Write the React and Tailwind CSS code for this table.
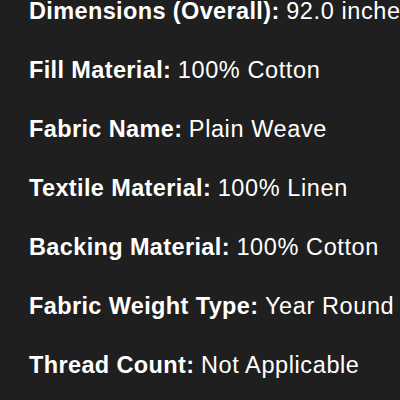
const specs = [
  ["Dimensions (Overall):", "92.0 inches (H) x 87.0 inches (W)"],
  ["Fill Material:", "100% Cotton"],
  ["Fabric Name:", "Plain Weave"],
  ["Textile Material:", "100% Linen"],
  ["Backing Material:", "100% Cotton"],
  ["Fabric Weight Type:", "Year Round"],
  ["Thread Count:", "Not Applicable"],
];

export default function App() {
  return (
    <div
      className="w-[400px] h-[400px] overflow-hidden bg-[#1f1f1f] text-white pl-[29px]"
      style={{ fontFamily: '"Liberation Sans", Arial, sans-serif' }}
    >
      <ul className="-mt-[18px] flex flex-col">
        {specs.map(([label, value]) => (
          <li key={label} className="whitespace-nowrap text-[23.5px] leading-[59px]">
            <span className="font-bold tracking-[0.37px]">{label}</span>{" "}
            <span className="tracking-[0.6px]">{value}</span>
          </li>
        ))}
      </ul>
    </div>
  );
}
